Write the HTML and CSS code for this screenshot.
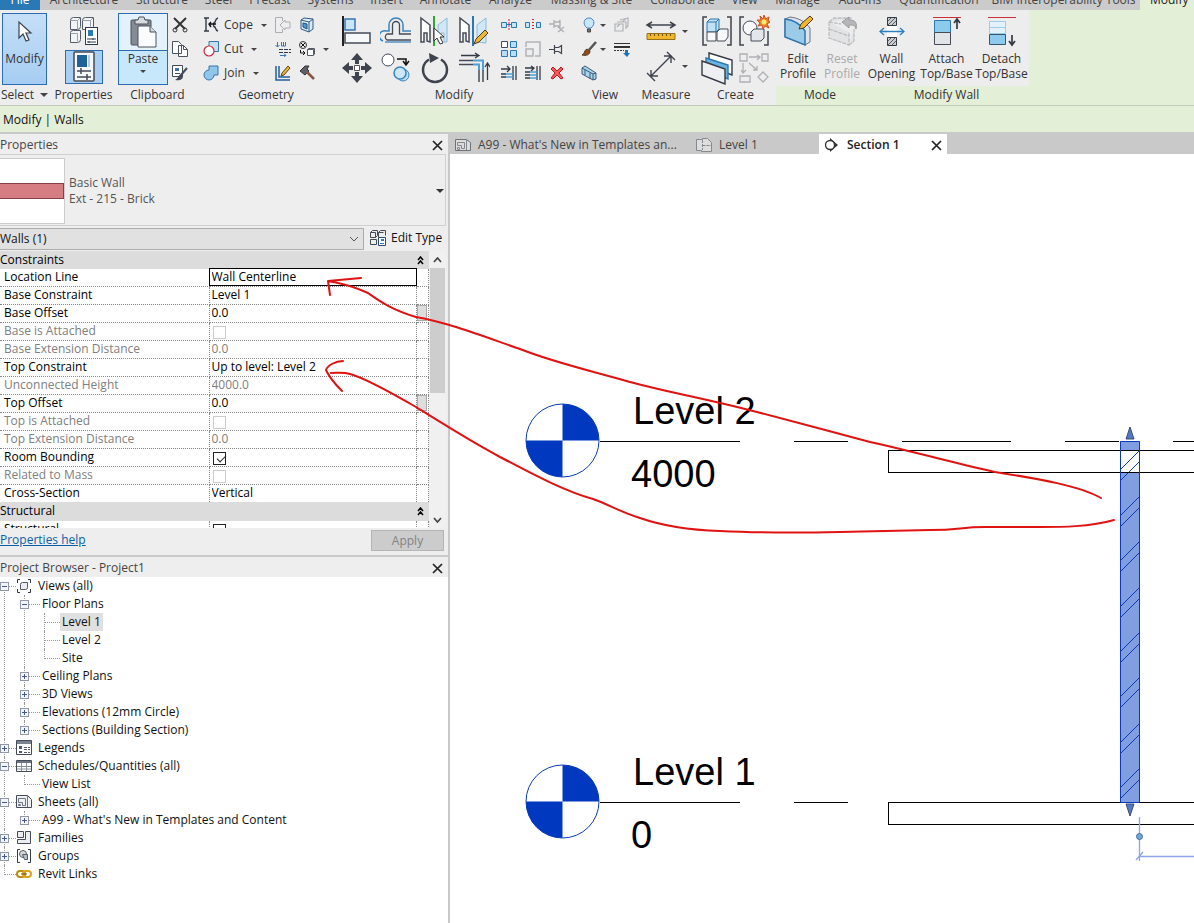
FILE: index.html
```html
<!DOCTYPE html>
<html lang="en">
<head>
<meta charset="utf-8">
<title>Project1 - Section 1</title>
<link rel="stylesheet" href="styles.css">
</head>
<body>
<nav class="tabs">
  <a class="tab file" href="#">File</a><a class="tab" href="#">Architecture</a><a class="tab" href="#">Structure</a><a class="tab" href="#">Steel</a><a class="tab" href="#">Precast</a><a class="tab" href="#">Systems</a><a class="tab" href="#">Insert</a><a class="tab" href="#">Annotate</a><a class="tab" href="#">Analyze</a><a class="tab" href="#">Massing &amp; Site</a><a class="tab" href="#">Collaborate</a><a class="tab" href="#">View</a><a class="tab" href="#">Manage</a><a class="tab" href="#">Add-Ins</a><a class="tab" href="#">Quantification</a><a class="tab" href="#">BIM Interoperability Tools</a><a class="tab current" href="#">Modify | Walls</a>
</nav>

<header class="ribbon">
  <section class="group">
    <div class="tools">
      <button class="modify-btn"><svg width="16" height="24" viewBox="0 0 16 24"><path d="M2 2v16l4-4 3 7 3-1-3-7h5z" fill="#fff" stroke="#3c4450" stroke-width="1.2"/></svg>Modify</button>
    </div>
    <h2>Select <i class="caret big"></i></h2>
  </section>

  <section class="group">
    <div class="tools stack">
      <button aria-label="Type properties"><svg width="32" height="32" viewBox="0 0 32 32"><g fill="#f3f4f6" stroke="#555c68" stroke-width="1"><path d="M2.500 5.500q0-3 3-3h7v9q0 3-3 3h-7zM14.500 5.500q0-3 3-3h8v9q0 3-3 3h-8zM2.500 17.500q0-2 3-2h7v9q0 3-3 3h-7z"/><path d="M2.500 5.500h7v9M9.500 5.500l3-3M14.500 5.500h8v6M22.500 5.500l3-3M2.500 18.500h7v8" fill="none" stroke="#9aa1ac"/></g><rect x="17.500" y="12.500" width="12" height="17" fill="#fff" stroke="#2b3a50"/><path d="M20 15h5v6h-5z" fill="#2c79b5"/><path d="M19 24h9M19 27h9M25 23v2M21 26v2" stroke="#2b3a50"/></svg></button>
      <button class="pressed" aria-label="Properties"><svg width="24" height="32" viewBox="0 0 24 32"><rect x="2" y="1" width="20" height="29" rx="1" fill="#f6f7f8" stroke="#444b57" stroke-width="1.500"/><path d="M5 4h10v12H5z" fill="#1f6199"/><path d="M16 4h2v12h-2z" fill="#b8cbdc"/><path d="M5 20h14M5 26h14M9 17v6M15 23v6" stroke="#444b57" stroke-width="1.500"/></svg></button>
    </div>
    <h2>Properties</h2>
  </section>

  <section class="group">
    <div class="tools clip">
      <button class="paste"><span class="paste-top"><svg width="28" height="32" viewBox="0 0 28 32"><rect x="2" y="4" width="20" height="25" rx="1" fill="#858b95" stroke="#4c525d"/><path d="M6 8V4h3l1-3h5l1 3h3v4z" fill="#d8dbe0" stroke="#4c525d"/><path d="M9 10h12l6 6v15H9z" fill="#fbfcfd" stroke="#4c525d"/><path d="M21 10v6h6" fill="#d2d7df" stroke="#4c525d"/></svg></span><span class="paste-bottom">Paste<i class="caret"></i></span></button>
      <div class="col3">
        <button aria-label="Cut"><svg width="16" height="16" viewBox="0 0 16 16"><path d="M2 1l11 11M14 1L3 12" stroke="#333" stroke-width="2"/><circle cx="3" cy="13" r="2" fill="none" stroke="#333"/><circle cx="13" cy="13" r="2" fill="none" stroke="#333"/></svg></button>
        <button aria-label="Copy"><svg width="16" height="16" viewBox="0 0 16 16"><path d="M.5 .5h6l3 3v9h-9zM6.500 4.500h5l4 4v7h-9z" fill="#fff" stroke="#4c525d"/><path d="M11.500 4.500v4h4" fill="none" stroke="#4c525d"/></svg></button>
        <button aria-label="Match type"><svg width="16" height="16" viewBox="0 0 16 16"><path d="M.5 .5h10v11H.5z" fill="#fff" stroke="#444b57"/><path d="M3 3h4v3H3z" fill="#3974b0"/><path d="M3 8.500h5" stroke="#444b57"/><path d="M15 3L9 10" stroke="#444b57" stroke-width="2"/><path d="M9 9c-3 1-2 4-6 6 4 1 8 0 8-4z" fill="#444b57"/></svg></button>
      </div>
    </div>
    <h2>Clipboard</h2>
  </section>

  <section class="group">
    <div class="tools geo">
      <div class="col3 left">
        <button class="lab"><svg width="16" height="16" viewBox="0 0 16 16"><path d="M1 1h5M1 14h5M3 1v13M15 1c-3 1-2 3-3 4-2 1-2 5 0 5 1 1 0 3 3 4" fill="none" stroke="#333a45" stroke-width="1.400"/><path d="M13 7H6M8 5L6 7l2 3" fill="none" stroke="#111" stroke-width="1.400"/></svg>Cope<i class="caret"></i></button>
        <button class="lab"><svg width="16" height="16" viewBox="0 0 16 16"><path d="M6 .5h9.500v10H6z" fill="#bfe0f5" stroke="#3974b0"/><circle cx="6" cy="10" r="5" fill="#fff" stroke="#cc2936" stroke-width="1.200"/></svg>Cut<i class="caret"></i></button>
        <button class="lab"><svg width="16" height="16" viewBox="0 0 16 16"><path d="M6 1h9v9h-4a5 5 0 1 1-5-5z" fill="#8fc6ea" stroke="#3974b0"/></svg>Join<i class="caret"></i></button>
      </div>
      <div class="col3">
        <button aria-label="Join end"><svg width="16" height="16" viewBox="0 0 16 16"><path d="M7.500 4V.5h-7v15h7V12M15 5h-5V3L5 8l5 5v-2h5z" fill="#eee" stroke="#aaadb2"/></svg></button>
        <button aria-label="Wall joins"><svg width="16" height="16" viewBox="0 0 16 16"><path d="M2.500 1v5M.5 4l2 2 2-2M6.500 1v4h4V1M8.500 1v4" fill="none" stroke="#3974b0"/><path d="M4 8.500h12M4 11.500h12" stroke="#333a45" stroke-dasharray="4 1"/><path d="M5 14.500h6M9 12.500l2 2-2 1" fill="none" stroke="#3974b0"/></svg></button>
        <button aria-label="Beam joins"><svg width="16" height="16" viewBox="0 0 16 16"><path d="M1 1v14h14M4 1v11h11" fill="none" stroke="#225d9c" stroke-width="1.500"/><path d="M6 11l1-3 6-7 2 2-6 7z" fill="#eeb535" stroke="#594420"/></svg></button>
      </div>
      <div class="col3">
        <button aria-label="Split face"><svg width="16" height="16" viewBox="0 0 16 16"><path d="M2 3l8 2v10l-8-3zM10 5l4-3v10l-4 3M2 3l3-2 9 1" fill="#d6eaf7" stroke="#315a85"/><path d="M4 6l4 1v5l-4-2z" fill="#4c9bd0" stroke="#20507c"/></svg></button>
        <button aria-label="Demolish"><svg width="16" height="16" viewBox="0 0 16 16"><circle cx="4" cy="4" r="3.500" fill="none" stroke="#333"/><path d="M2 2l4 4M6 2L2 6M1.500 9v3h4M4 10l2 2-2 2" fill="none" stroke="#111"/><path d="M8.500 8.500h6v6h-6zM8.500 8.500l1-1h6v6" fill="#fff" stroke="#555b66"/></svg></button>
        <button aria-label="Hammer"><svg width="16" height="16" viewBox="0 0 16 16"><path d="M1 6l5-5h4L8 4l2 2-4 4z" fill="#5d6068" stroke="#333"/><path d="M8 7l7 7" stroke="#8b5546" stroke-width="2.500"/></svg></button>
      </div>
      <i class="caret"></i>
    </div>
    <h2>Geometry</h2>
  </section>

  <section class="group">
    <div class="tools mod">
      <div class="big8">
        <button aria-label="Align"><svg width="32" height="32" viewBox="0 0 32 32"><path d="M2 1v30" stroke="#222" stroke-width="2"/><path d="M4 4h10v11H4z" fill="#c9e6f8" stroke="#3974b0" stroke-width="1.500"/><path d="M4 18h25v10H4z" fill="#f7f8fa" stroke="#444b57" stroke-width="1.500"/></svg></button>
        <button aria-label="Offset"><svg width="32" height="32" viewBox="0 0 32 32"><path d="M31 16h-8V10a7 7 0 0 0-14 0v6H6a5 5 0 0 0-3 10" fill="none" stroke="#3a84bd" stroke-width="1.500"/><path d="M31 19H19.500V10a3.500 3.500 0 0 0-7 0v9H7a3.500 3.500 0 0 0 0 6h24" fill="none" stroke="#444b57" stroke-width="1.300"/><path d="M31 27H5" stroke="#3a84bd" stroke-width="1.300"/></svg></button>
        <button aria-label="Mirror pick"><svg width="32" height="32" viewBox="0 0 32 32"><path d="M2 3l9 7v17l-3-1v-8H5v9H2z" fill="#fff" stroke="#444b57" stroke-width="1.500"/><path d="M28 3l-9 7v17l3-1v-8h3v9h3z" fill="#cfe7f7" stroke="#8cbad8"/><path d="M15 1v30" stroke="#35a33c" stroke-width="2"/><path d="M15 13v13l3-3 3 6 3-1-3-6h4z" fill="#fff" stroke="#333"/></svg></button>
        <button aria-label="Mirror draw"><svg width="32" height="32" viewBox="0 0 32 32"><path d="M2 3l9 7v17l-3-1v-8H5v9H2z" fill="#fff" stroke="#444b57" stroke-width="1.500"/><path d="M28 3l-9 7v17l9 1z" fill="#cfe7f7" stroke="#8cbad8"/><path d="M15 1v30" stroke="#2678bc" stroke-width="2"/><path d="M16 29l2-5 9-9 3 3-9 9z" fill="#f1b52e" stroke="#4a3a22"/></svg></button>
        <button aria-label="Move"><svg width="32" height="32" viewBox="0 0 32 32"><path d="M16 1l6 7h-4v4h-4V8h-4zM16 31l6-7h-4v-4h-4v4h-4zM1 16l7-6v4h4v4H8v4zM31 16l-7-6v4h-4v4h4v4z" fill="#3e434d"/><path d="M13.500 13.500h5v5h-5z" fill="#fff" stroke="#555"/></svg></button>
        <button aria-label="Copy element"><svg width="32" height="32" viewBox="0 0 32 32"><circle cx="8" cy="8" r="6" fill="#fff" stroke="#444b57"/><path d="M17 7h9v5M23 9l3 4 3-4" fill="none" stroke="#111" stroke-width="1.500"/><circle cx="23" cy="23" r="6" fill="#b8ddf4" stroke="#3a84bd"/><circle cx="20" cy="21" r="6" fill="#cce8f8" stroke="#3a84bd" stroke-width="1.500"/></svg></button>
        <button aria-label="Rotate"><svg width="32" height="32" viewBox="0 0 32 32"><path d="M10 7.500a12 12 0 1 0 12 0" fill="none" stroke="#3e434d" stroke-width="2.500"/><path d="M10 1l10 5-9 5z" fill="#3e434d"/></svg></button>
        <button aria-label="Trim"><svg width="32" height="32" viewBox="0 0 32 32"><path d="M1 8.500h14M1 12.500h14" stroke="#444b57" stroke-width="1.500"/><path d="M15 8.500h10V18M15 12.500h6V18" fill="none" stroke="#4f9ed4" stroke-width="2"/><path d="M25 18v12M21 18v12" stroke="#444b57" stroke-width="1.500"/><path d="M3 3.500h17M17 1l4 2.500L17 6M29.500 28V12M27 15l2.500-4 2.500 4" fill="none" stroke="#333a45" stroke-width="1.300"/></svg></button>
      </div>
      <div class="col3">
        <button aria-label="Split"><svg width="16" height="16" viewBox="0 0 16 16"><path d="M.5 5.500h5v5h-5zM10.500 5.500h5v5h-5z" fill="#c9e6f8" stroke="#2d77ae"/><path d="M5 7.500h6" stroke="#2d77ae"/><path d="M8 2v12" stroke="#cc2936" stroke-dasharray="2 1"/></svg></button>
        <button aria-label="Array"><svg width="16" height="16" viewBox="0 0 16 16"><path d="M.5 .5h6v6h-6z" fill="#fff" stroke="#444b57"/><path d="M9.500 .5h6v6h-6zM.5 9.500h6v6h-6zM9.500 9.500h6v6h-6z" fill="#b9ddf4" stroke="#2d77ae"/></svg></button>
        <button aria-label="Trim single"><svg width="16" height="16" viewBox="0 0 16 16"><path d="M0 4h9M6 1l3 3-3 3M12 1v14M15 1v14M0 12h5M0 9h5" fill="none" stroke="#333a45" stroke-width="1.300"/><path d="M5 9h7M5 12h7" stroke="#4f9ed4" stroke-width="1.500"/></svg></button>
      </div>
      <div class="col3">
        <button aria-label="Split with gap"><svg width="16" height="16" viewBox="0 0 16 16"><path d="M.5 5.500h4v5h-4zM11.500 5.500h4v5h-4z" fill="#c9e6f8" stroke="#2d77ae"/><path d="M8 2v12" stroke="#cc2936" stroke-width="2" stroke-dasharray="1 2"/></svg></button>
        <button aria-label="Scale"><svg width="16" height="16" viewBox="0 0 16 16"><path d="M1 1h14v14h-5M1 1v5M1 8h7v7H1z" fill="#eee" stroke="#b1b3b7" stroke-width="1.500"/></svg></button>
        <button aria-label="Trim multiple"><svg width="16" height="16" viewBox="0 0 16 16"><path d="M0 3h9M6 1l3 2-3 3M12 1v14M15 1v14M0 7h5M0 10h5M0 13h5" fill="none" stroke="#333a45" stroke-width="1.300"/><path d="M5 7h7M5 10h7M5 13h7" stroke="#4f9ed4" stroke-width="1.500"/></svg></button>
      </div>
      <div class="col3">
        <button aria-label="Unpin"><svg width="16" height="16" viewBox="0 0 16 16"><path d="M0 7h5M5 3v8M5 5h5l1-2v8l-1-2H5M9 10l6 5M15 10l-6 5" fill="none" stroke="#aeb0b4" stroke-width="1.300"/></svg></button>
        <button aria-label="Pin"><svg width="16" height="16" viewBox="0 0 16 16"><path d="M0 8.500h5M5.500 4v9M5.500 6.500h4l3-2v8l-3-2h-4" fill="none" stroke="#3e434d" stroke-width="1.200"/></svg></button>
        <button aria-label="Delete"><svg width="16" height="16" viewBox="0 0 16 16"><path d="M2 4l2-2 4 4 4-4 2 2-4 4 4 5-2 1-4-4-4 4-2-1 4-5z" fill="#f05a5a" stroke="#bd1820"/></svg></button>
      </div>
    </div>
    <h2>Modify</h2>
  </section>

  <section class="group">
    <div class="tools view">
      <div class="col3 left">
        <button class="lab tight" aria-label="Hide"><svg width="16" height="16" viewBox="0 0 16 16"><path d="M6 11C1 7 3 1 8 1s7 6 2 10z" fill="#c9e6fb" stroke="#4a86bd"/><path d="M6.500 12h3v3h-3z" fill="#777" stroke="#444"/></svg><i class="caret"></i></button>
        <button class="lab tight" aria-label="Override"><svg width="16" height="16" viewBox="0 0 16 16"><path d="M15 1L8 9" stroke="#555" stroke-width="2.500"/><path d="M6 8l3 2c0 4-4 5-8 4 3-1 2-5 5-6z" fill="#8a4f22" stroke="#5a3418"/></svg><i class="caret"></i></button>
        <button aria-label="Selection box"><svg width="16" height="16" viewBox="0 0 16 16"><path d="M1 3l3-2 11 7v6l-3 1L1 9z" fill="#a9d4ee" stroke="#3e5872"/><path d="M1 3l11 6v6M12 9l3-1M4 5v5M9 8v6" fill="none" stroke="#3e5872"/></svg></button>
      </div>
      <div class="col3">
        <button aria-label="Displace"><svg width="16" height="16" viewBox="0 0 16 16"><path d="M1 7h8v7H1zM3 5h9v7M6 3l8-2v8l-2 2M3 10l3-3M8 5l4-3" fill="none" stroke="#b1b3b7" stroke-width="1.200"/></svg></button>
        <button aria-label="Linework"><svg width="16" height="16" viewBox="0 0 16 16"><path d="M0 2.500h16" stroke="#333"/><path d="M0 6h16" stroke="#333" stroke-width="2"/><path d="M0 9.500h10" stroke="#333" stroke-dasharray="2 1"/><path d="M11 9h3v3h2l-3 4-4-4h2z" fill="#2272b8"/></svg></button>
        <span></span>
      </div>
    </div>
    <h2>View</h2>
  </section>

  <section class="group">
    <div class="tools stack">
      <button class="lab" aria-label="Measure"><svg width="32" height="32" viewBox="0 0 32 32"><path d="M2 9h28M7 6L2 9l5 3M25 6l5 3-5 3" fill="none" stroke="#3e434d" stroke-width="1.500"/><path d="M2 17.500h28v6H2z" fill="#f0b62c" stroke="#98701a"/><path d="M5.500 18v2M9.500 18v2M13.500 18v2M17.500 18v2M21.500 18v2M25.500 18v2" stroke="#6d5117"/></svg><i class="caret"></i></button>
      <button class="lab" aria-label="Aligned dimension"><svg width="32" height="32" viewBox="0 0 32 32"><path d="M6 25L26 5M19 5h7v7M6 19v6h7M22 1l8 8M2 22l8 8" fill="none" stroke="#3e434d" stroke-width="1.400"/></svg><i class="caret"></i></button>
    </div>
    <h2>Measure</h2>
  </section>

  <section class="group">
    <div class="tools create">
      <button aria-label="Create assembly"><svg width="32" height="32" viewBox="0 0 32 32"><path d="M6 2H2v28h4M26 2h4v28h-4" fill="none" stroke="#3e434d" stroke-width="1.500"/><path d="M6 7l3-3h9v10l-3 3H6z" fill="#bfe2f6" stroke="#2d77ae"/><path d="M6 7h9v10M15 7l3-3" fill="none" stroke="#2d77ae"/><path d="M6 17h9v9H6zM16 17l3-3h8v8l-3 4h-8z" fill="#f7f8fa" stroke="#444b57"/></svg></button>
      <button aria-label="Create parts"><svg width="32" height="32" viewBox="0 0 32 32"><path d="M6 2H2v28h4M26 30h4V16" fill="none" stroke="#3e434d" stroke-width="1.500"/><circle cx="12" cy="13" r="7" fill="#f7f8fa" stroke="#444b57"/><path d="M13 17l3-3h10v9l-3 3H13z" fill="#e3e6ea" stroke="#444b57"/><path d="M26 0l1.500 4L31 2l-1 4 2 1-3 2 2 4-4-2-2 3-1-4-4 1 2-3-3-3 4 0-1-4 3 3z" fill="#f08a24" stroke="#cf4a1c"/><circle cx="26" cy="7" r="2.500" fill="#ffe878"/></svg></button>
      <button aria-label="Create similar"><svg width="34" height="34" viewBox="0 0 34 34"><g stroke="#333a45" stroke-width="1.400"><path d="M9 2l23 7v15L9 15z" fill="#fff"/><path d="M6 7l22 7v14L6 19z" fill="#68b2e3" stroke="#2d77ae"/><path d="M2 10l23 8v15L2 24z" fill="#edeff2"/></g></svg></button>
      <button aria-label="Create group"><svg width="32" height="32" viewBox="0 0 32 32"><path d="M2 2h7v7H2zM24 2h6v7h-6zM2 24h10v6H2zM25 20l5 5-5 5-5-5zM11 5h11M19 3l3 2-3 3M5 11v10M3 18l2 3 3-3M11 11l8 7M19 14v4h-4" fill="none" stroke="#aeb0b4" stroke-width="1.300"/></svg></button>
    </div>
    <h2>Create</h2>
  </section>

  <section class="group ctx">
    <div class="tools wide">
      <button class="tall"><svg width="32" height="32" viewBox="0 0 32 32"><path d="M3 4l5-2c8 1 15 4 20 11v14l-5 3L3 22z" fill="#dde3e8" stroke="#6b7683"/><path d="M3 4c9 1 15 4 20 12v14L3 22z" fill="#9ccbe8" stroke="#2d77ae" stroke-width="1.500"/><path d="M17 14l2-5 9-8 3 3-9 9z" fill="#f1b52e" stroke="#4a3a22"/></svg>Edit<br>Profile</button>
      <button class="tall" disabled><svg width="32" height="32" viewBox="0 0 32 32"><path d="M3 7l5-4h18M3 7v16l20 7V17M3 14l20 7M23 30l5-4V14M3 7l12 2" fill="#e2e3e5" stroke="#bcbec1" stroke-width="1.300" stroke-dasharray="4 1"/><path d="M16 7l7-5v3c7 0 8 3 7 9-1-4-3-4-7-4v3z" fill="#b5b7ba" stroke="#999"/></svg>Reset<br>Profile</button>
    </div>
    <h2>Mode</h2>
  </section>

  <section class="group ctx">
    <div class="tools wide">
      <button class="tall"><svg width="32" height="32" viewBox="0 0 32 32"><path d="M11.500 2.500h9v8h-9zM11.500 22.500h9v8h-9z" fill="#c9ccd1" stroke="#333a45"/><path d="M12 6l3-3M12 10l7-7M16 10l4-4M12 26l3-3M12 30l7-7M16 30l4-4" stroke="#555c66"/><path d="M11 11h10v11H11z" fill="#fff"/><path d="M4 16.500h24M8 13l-4 3.500L8 20M24 13l4 3.500-4 3.500" fill="none" stroke="#2d7fc0" stroke-width="1.300"/></svg>Wall<br>Opening</button>
      <button class="tall"><svg width="32" height="32" viewBox="0 0 32 32"><path d="M2 2.500h28" stroke="#cb2f38"/><path d="M3.500 5.500h16v12h-16z" fill="#8ec9ee" stroke="#2d77ae"/><path d="M3.500 17.500h16v12h-16z" fill="#e2e4e8" stroke="#444b57"/><path d="M26 14V4M23 8l3-4 3 4" fill="none" stroke="#333a45" stroke-width="1.700"/></svg>Attach<br>Top/Base</button>
      <button class="tall"><svg width="32" height="32" viewBox="0 0 32 32"><path d="M2 2.500h28" stroke="#cb2f38"/><path d="M3.500 6.500h16v6h-16zM3.500 12.500h16v6h-16z" fill="#e3f2fb" stroke="#9ccce9"/><path d="M3.500 19.500h16v10h-16z" fill="#8ec9ee" stroke="#36546e"/><path d="M26 20v10M23 26l3 4 3-4" fill="none" stroke="#333a45" stroke-width="1.700"/></svg>Detach<br>Top/Base</button>
    </div>
    <h2>Modify Wall</h2>
  </section>
</header>

<div class="options">Modify | Walls</div>

<div class="work">
  <aside class="side">
    <section class="props">
      <div class="title"><h3>Properties</h3><button aria-label="Close properties"><svg width="11" height="11" viewBox="0 0 11 11"><path d="M1 1l9 9M10 1l-9 9" stroke="#222" stroke-width="1.700"/></svg></button></div>
      <div class="type">
        <div class="thumb"><span></span></div>
        <p>Basic Wall<br>Ext - 215 - Brick</p>
        <i class="caret big"></i>
      </div>
      <div class="filter">
        <select aria-label="Element filter"><option>Walls (1)</option></select>
        <svg class="chev" width="10" height="6" viewBox="0 0 10 6"><path d="M1 1l4 4 4-4" fill="none" stroke="#555"/></svg>
        <button class="edit"><svg width="17" height="16" viewBox="0 0 17 16"><path d="M.5 2.500l2-2h5v5l-2 2h-5zM8.500 2.500l2-2h5v5M.5 9.500h6v5h-6zM.5 2.500h5v5M8.500 7.500v-5h5" fill="none" stroke="#444b57"/><path d="M8.500 7.500h7v8h-7z" fill="#fff" stroke="#2b4a72"/><path d="M11 9h3v2h-3z" fill="#2c79b5"/><path d="M10 13.500h4" stroke="#2c79b5"/></svg>Edit Type</button>
      </div>
      <div class="gridwrap">
        <table>
          <colgroup><col class="c1"><col><col class="c3"></colgroup>
          <tbody>
          <tr class="cat first"><th colspan="2">Constraints</th><td><svg width="7" height="9" viewBox="0 0 7 9"><path d="M1 4l2.500-3L6 4M1 8l2.500-3L6 8" fill="none" stroke="#000" stroke-width="1.500"/></svg></td></tr>
          <tr class="sel"><th><label for="p1">Location Line</label></th><td><input id="p1" value="Wall Centerline"></td><td></td></tr>
          <tr><th><label for="p2">Base Constraint</label></th><td><input id="p2" value="Level 1"></td><td></td></tr>
          <tr><th><label for="p3">Base Offset</label></th><td><input id="p3" value="0.0"></td><td><button class="assoc" aria-label="Associate base offset"></button></td></tr>
          <tr class="off"><th><label for="p4">Base is Attached</label></th><td><input id="p4" type="checkbox" disabled></td><td></td></tr>
          <tr class="off"><th><label for="p5">Base Extension Distance</label></th><td><input id="p5" value="0.0" disabled></td><td></td></tr>
          <tr><th><label for="p6">Top Constraint</label></th><td><input id="p6" value="Up to level: Level 2"></td><td></td></tr>
          <tr class="off"><th><label for="p7">Unconnected Height</label></th><td><input id="p7" value="4000.0" disabled></td><td></td></tr>
          <tr><th><label for="p8">Top Offset</label></th><td><input id="p8" value="0.0"></td><td><button class="assoc" aria-label="Associate top offset"></button></td></tr>
          <tr class="off"><th><label for="p9">Top is Attached</label></th><td><input id="p9" type="checkbox" disabled></td><td></td></tr>
          <tr class="off"><th><label for="p10">Top Extension Distance</label></th><td><input id="p10" value="0.0" disabled></td><td></td></tr>
          <tr><th><label for="p11">Room Bounding</label></th><td><input id="p11" type="checkbox" checked></td><td></td></tr>
          <tr class="off"><th><label for="p12">Related to Mass</label></th><td><input id="p12" type="checkbox" disabled></td><td></td></tr>
          <tr><th><label for="p13">Cross-Section</label></th><td><input id="p13" value="Vertical"></td><td></td></tr>
          <tr class="cat"><th colspan="2">Structural</th><td><svg width="7" height="9" viewBox="0 0 7 9"><path d="M1 4l2.500-3L6 4M1 8l2.500-3L6 8" fill="none" stroke="#000" stroke-width="1.500"/></svg></td></tr>
          <tr><th><label for="p14">Structural</label></th><td><input id="p14" type="checkbox"></td><td></td></tr>
          </tbody>
        </table>
        <div class="scroll"><svg width="9" height="6" viewBox="0 0 9 6"><path d="M1 5l3.500-4L8 5" fill="none" stroke="#444" stroke-width="1.700"/></svg><span></span><svg width="9" height="6" viewBox="0 0 9 6"><path d="M1 1l3.500 4L8 1" fill="none" stroke="#444" stroke-width="1.700"/></svg></div>
      </div>
      <div class="foot"><a href="#">Properties help</a><button disabled>Apply</button></div>
    </section>

    <section class="browser">
      <div class="title"><h3>Project Browser - Project1</h3><button aria-label="Close browser"><svg width="11" height="11" viewBox="0 0 11 11"><path d="M1 1l9 9M10 1l-9 9" stroke="#222" stroke-width="1.700"/></svg></button></div>
      <ul class="tree">
        <li class="top"><div class="row"><i class="ex minus"></i><i class="dash"></i><svg width="16" height="16" viewBox="0 0 16 16"><path d="M4 1.500H1.500V5M12 1.500h2.500V5M4 14.500H1.500V11M12 14.500h2.500V11" fill="none" stroke="#333a45"/><path d="M4.500 6.500q0-2 2-2h5v5q0 2-2 2h-5z" fill="#eceef1" stroke="#555b66"/></svg><span>Views (all)</span></div>
          <ul>
            <li><div class="row"><i class="ex minus"></i><i class="dash"></i><span>Floor Plans</span></div>
              <ul class="leaves">
                <li><div class="row"><i class="dash"></i><span class="hot">Level 1</span></div></li>
                <li><div class="row"><i class="dash"></i><span>Level 2</span></div></li>
                <li><div class="row"><i class="dash"></i><span>Site</span></div></li>
              </ul></li>
            <li><div class="row"><i class="ex"></i><i class="dash"></i><span>Ceiling Plans</span></div></li>
            <li><div class="row"><i class="ex"></i><i class="dash"></i><span>3D Views</span></div></li>
            <li><div class="row"><i class="ex"></i><i class="dash"></i><span>Elevations (12mm Circle)</span></div></li>
            <li><div class="row"><i class="ex"></i><i class="dash"></i><span>Sections (Building Section)</span></div></li>
          </ul></li>
        <li><div class="row"><i class="ex"></i><i class="dash"></i><svg width="16" height="16" viewBox="0 0 16 16"><path d="M.5 .5h15v14H.5z" fill="#fff" stroke="#444b57"/><path d="M1 1h14v3H1z" fill="#7b838e"/><path d="M3 6h3v3H3zM3 11h3v2H3z" fill="#555b66"/><path d="M8 7.500h6M8 9.500h6M8 12.500h6" stroke="#555b66" stroke-dasharray="3 1"/></svg><span>Legends</span></div></li>
        <li><div class="row"><i class="ex minus"></i><i class="dash"></i><svg width="16" height="16" viewBox="0 0 16 16"><path d="M.5 2.500h15v11H.5z" fill="#fff" stroke="#444b57"/><path d="M1 3h14v2H1z" fill="#6d7580"/><path d="M1 8.500h14M1 11h14M5.500 5v8M10.500 5v8" stroke="#8a919b"/></svg><span>Schedules/Quantities (all)</span></div>
          <ul><li><div class="row leaf"><i class="dash"></i><span>View List</span></div></li></ul></li>
        <li><div class="row"><i class="ex minus"></i><i class="dash"></i><svg width="16" height="16" viewBox="0 0 16 16"><path d="M.5 1.500h11l4 4v8H.5z" fill="#eef0f3" stroke="#444b57"/><path d="M2.500 4.500h7v7h-3v-3h-4zM2.500 10.500h2v1h-2zM11.500 2v11" fill="none" stroke="#6d7580"/></svg><span>Sheets (all)</span></div>
          <ul><li><div class="row"><i class="ex"></i><i class="dash"></i><span>A99 - What's New in Templates and Content</span></div></li></ul></li>
        <li><div class="row"><i class="ex"></i><i class="dash"></i><svg width="16" height="16" viewBox="0 0 16 16"><path d="M1.500 1.500h6v6h-6zM9.500 1.500h5v12h-13v-4h8z" fill="#eceef1" stroke="#444b57"/></svg><span>Families</span></div></li>
        <li><div class="row"><i class="ex"></i><i class="dash"></i><svg width="16" height="16" viewBox="0 0 16 16"><path d="M4 1.500H1.500v13H4M12 1.500h2.500v13H12" fill="none" stroke="#333a45"/><circle cx="7" cy="6" r="3.500" fill="#d5d9df" stroke="#555b66"/><path d="M6.500 6.500h5v5h-3z" fill="#b9bfc8" stroke="#555b66"/></svg><span>Groups</span></div></li>
        <li><div class="row leaf root"><i class="dash"></i><svg width="16" height="16" viewBox="0 0 16 16"><rect x="1" y="5" width="8" height="6" rx="3" fill="none" stroke="#c08a10" stroke-width="2"/><rect x="7" y="5" width="8" height="6" rx="3" fill="none" stroke="#d9a520" stroke-width="2"/><path d="M5 8h6" stroke="#79560c"/></svg><span>Revit Links</span></div></li>
      </ul>
    </section>
  </aside>

  <main class="stage">
    <nav class="docs">
      <a href="#"><svg width="16" height="14" viewBox="0 0 16 14"><path d="M.5 1.500h11l4 3v8H.5z" fill="#ddd" stroke="#6d7277"/><path d="M2.500 4.500h7v6h-3v-3h-4zM2.500 9.500h2v2h-2zM11.500 2v10" fill="none" stroke="#85898e"/></svg>A99 - What's New in Templates an...</a>
      <a href="#"><svg width="16" height="14" viewBox="0 0 16 14"><path d="M.5 1.500h6v-1h5l4 4v9H5.500v-1h-5z" fill="#ddd" stroke="#85898e"/><path d="M6.500 2v10M6.500 7.500h9" fill="none" stroke="#85898e" stroke-dasharray="3 1"/></svg>Level 1</a>
      <a href="#" class="active"><svg width="14" height="14" viewBox="0 0 14 14"><path d="M6 0l8 7-8 7z" fill="#333"/><circle cx="6" cy="7" r="4.500" fill="#fff" stroke="#333" stroke-width="1.300"/></svg>Section 1<svg class="x" width="11" height="11" viewBox="0 0 11 11"><path d="M1 1l9 9M10 1l-9 9" stroke="#222" stroke-width="1.700"/></svg></a>
    </nav>
    <div class="canvas">
      <svg class="drawing" width="744" height="769" viewBox="450 154 744 769">
        <defs>
          <g id="head"><circle r="36.500" fill="#fff" stroke="#0a3ab8"/><path d="M0 0V-36.500A36.500 36.500 0 0 1 36.500 0zM0 0V36.500A36.500 36.500 0 0 1-36.500 0z" fill="#0038c0"/></g>
          <path id="hatch" d="M1121 469l18-18M1121 480l18-18"/>
        </defs>
        <use href="#head" x="562.500" y="440.500"/>
        <use href="#head" x="562.500" y="801.500"/>
        <g class="lettering"><text x="633" y="424">Level 2</text><text x="631" y="487">4000</text><text x="633" y="785">Level 1</text><text x="631" y="848">0</text></g>
        <g fill="none" stroke="#000" shape-rendering="crispEdges">
          <path d="M600 441.500h140M794 441.500h54M902 441.500h109M1065 441.500h54M1173 441.500h200M600 802.500h140M794 802.500h54"/>
          <path d="M2000 450.500H888.500v22H2000M2000 802.500H888.500v22H2000"/>
        </g>
        <path d="M1120 441h20v361h-20z" fill="#809ee0"/>
        <path d="M1120 451h20v21h-20z" fill="#fff"/>
        <g stroke="#0a3ab8" fill="none">
          <use href="#hatch"/><use href="#hatch" y="46"/><use href="#hatch" y="91"/><use href="#hatch" y="137"/><use href="#hatch" y="182"/><use href="#hatch" y="227"/><use href="#hatch" y="273"/><use href="#hatch" y="318"/>
        </g>
        <path d="M1120 450.500h20M1120 472.500h20" stroke="#000"/>
        <path d="M1120.500 441.500h19v361h-19z" fill="none" stroke="#0a3ab8"/>
        <path d="M1130 427l4 12h-8zM1126 804h8l-4 12z" fill="#5578c4" stroke="#3d4d70"/>
        <g fill="none" stroke="#8fa4ea"><path d="M1139.500 817v44M1139.500 856.500H2000M1136 860l7-8" stroke-width="1.300"/><circle cx="1139.500" cy="836.500" r="3" fill="#6fa8dc" stroke="#3f6f9f"/></g>
      </svg>
    </div>
  </main>

  <svg class="markup" width="1194" height="789" viewBox="0 134 1194 789">
    <g fill="none" stroke="#e01212" stroke-width="2" stroke-linecap="round" stroke-linejoin="round">
      <path d="M1101 498C1080 486 1040 479 995 472C960 464 910 451 870 442C840 434 780 418 757 412C700 397 660 391 623 380C580 368 550 361 520 349C485 337 450 323 416 317C390 309 378 300 368 293C355 287 340 283 328 281M361 278L328 281l2 14"/>
      <path d="M1114 520C1090 527 1060 527 1040 527L985 527C960 527 960 530 930 530L840 532C790 533 740 532 720 531C690 530 660 525 640 518C620 512 610 505 593 499C560 490 520 467 500 457C470 441 440 422 416 407C390 392 365 378 350 374C343 372 338 373 331 373M343 361C335 361 327 366 326 370C330 379 337 386 342 391"/>
    </g>
  </svg>
</div>
</body>
</html>
```
FILE: styles.css
```css
* { box-sizing: border-box; }
html, body { height: 100%; }
body { margin: 0; display: flex; flex-direction: column; overflow: hidden; background: #c9c9c9; color: #333; font: 12px/16px "Open Sans", "Noto Sans", sans-serif; }
button { margin: 0; padding: 0; border: 0; background: none; color: inherit; font: inherit; display: flex; align-items: center; justify-content: center; }
svg { flex: none; display: block; }
h2, h3, p, ul { margin: 0; padding: 0; font: inherit; list-style: none; }
.caret { flex: none; width: 0; height: 0; border: 3px solid transparent; border-top-color: #444; border-bottom: 0; }
.caret.big { border-width: 4px 4px 0; }

.tabs { flex: none; height: 10px; overflow: hidden; display: grid; align-content: end; background: #cbcbcb;
  grid-template-columns: 40px 88px 68px 45px 58px 63px 49px 69px 61px 101px 81px 43px 63px 62px 96px 153px 60px; }
.tab { color: #444; text-decoration: none; text-align: center; white-space: nowrap; padding-bottom: 2px; }
.tab.file { background: #2a78b4; color: #fff; }
.tab.current { background: #e4efd8; color: #222; text-align: left; padding-left: 10px; }

.ribbon { flex: none; height: 96px; display: grid; background: linear-gradient(90deg, #ededed 776px, #e4efd8 776px); border-bottom: 1px solid #c3c9bd;
  grid-template-columns: 49px 69px 79px 138px 238px 64px 58px 81px 88px 165px; }
.group { display: flex; flex-direction: column; min-width: 0; }
.group h2 { height: 19px; line-height: 16px; padding-bottom: 2px; display: flex; align-items: center; justify-content: center; gap: 6px; white-space: nowrap; }
.tools { height: 76px; padding-top: 2px; display: flex; align-items: center; justify-content: center; }
.ctx .tools { background: #ededed; }
.modify-btn { width: 45px; height: 72px; flex-direction: column; justify-content: flex-start; padding-top: 6px; gap: 7px; border: 1px solid #2b6cb5; background: linear-gradient(#c5dff7, #a5cdf2); }
.stack { flex-direction: column; gap: 3px; }
.pressed { width: 38px; height: 34px; border: 1px solid #2b6cb5; background: #a8cff2; }
.clip { gap: 4px; justify-content: flex-start; }
.paste { width: 50px; height: 72px; flex-direction: column; border: 1px solid #2b6cb5; background: #c7e8fb; align-items: stretch; }
.paste-top { height: 37px; display: flex; justify-content: center; align-items: center; background: #e4f2fb; border-bottom: 1px solid #2b6cb5; }
.paste-bottom { flex: 1; display: flex; flex-direction: column; align-items: center; gap: 3px; }
.col3 { display: grid; grid-template-rows: repeat(3, 24px); align-items: center; justify-items: center; }
.col3.left { justify-items: start; }
.lab { gap: 5px; }
.lab .caret { margin-left: 3px; }
.lab.tight { gap: 0; }
.geo { gap: 8px; }
.mod { gap: 8px; justify-content: flex-start; padding-left: 2px; }
.big8 { display: grid; grid-template-columns: repeat(4, 39px); grid-template-rows: 37px 37px; align-items: center; justify-items: center; }
.view { gap: 8px; }
.stack .lab { gap: 2px; }
.create { display: grid; grid-template-columns: 37px 37px; grid-template-rows: 37px 37px; place-items: center; }
.wide { align-items: flex-start; }
.tall { flex: 1; height: 74px; flex-direction: column; justify-content: flex-start; padding-top: 3px; line-height: 15px; }
.tall svg { margin-bottom: 4px; }
.tall:disabled { color: #aaa; }

.options { flex: none; height: 28px; padding: 6px 3px; background: #e4efd8; color: #111; border-bottom: 2px solid #c9c9c9; }

.work { position: relative; flex: 1; min-height: 0; display: flex; }
.side { flex: none; width: 448px; margin-right: 2px; display: flex; flex-direction: column; }
.title { height: 20px; padding: 2px 5px 0 0; display: flex; align-items: center; justify-content: space-between; background: #eee; color: #444; }
.props { height: 421px; background: #eee; }
.type { height: 72px; margin-right: 2px; padding: 2px 1px 0 0; display: flex; align-items: center; border: 1px solid #d0d0d0; border-left: 0; color: #555; }
.type p { flex: 1; padding-left: 4px; }
.type .caret { border-top-color: #333; }
.thumb { width: 65px; height: 66px; display: flex; align-items: center; background: #fff; border: 1px solid #ccc; border-left: 0; }
.thumb span { width: 100%; height: 16px; background: #d67d84; border: 1px solid #884048; border-left: 0; }
.filter { position: relative; height: 25px; display: flex; align-items: center; padding-top: 1px; }
.filter select { appearance: none; width: 364px; height: 22px; padding: 0; border: 1px solid #adadad; border-left: 0; border-radius: 0; background: #e1e1e1; color: #111; font: inherit; }
.chev { position: absolute; left: 349px; top: 10px; }
.edit { gap: 4px; margin-left: 6px; padding-bottom: 2px; color: #111; }
.gridwrap { height: 277px; overflow: hidden; display: flex; }
table { width: 429px; flex: none; table-layout: fixed; border-collapse: collapse; background: #fff; color: #000; align-self: flex-start; }
.c1 { width: 209px; }
.c3 { width: 12px; }
th, td { height: 18px; padding: 0; font-weight: 400; line-height: 16px; text-align: left; vertical-align: top; border: 1px dotted #888; }
.first th, .first td { height: 17px; }
th { padding-left: 4px; border-left: 0; }
th label { display: block; height: 17px; }
td > svg { margin: 4px 0 0; }
.cat th { padding-left: 0; }
.cat th, .cat td { background: #dcdcdc; border-color: #dcdcdc; border-style: solid; }
.off { color: #808080; }
td input { display: block; width: 100%; height: 16px; line-height: 16px; margin: 0; padding: 0 2px; border: 0; background: none; color: inherit; font: inherit; }
.sel input { outline: 1px solid #000; outline-offset: 0; }
td input[type="checkbox"] { appearance: none; width: 13px; height: 13px; margin: 3px 0 1px 3px; border: 1px solid #222; background: #fff; }
td input[type="checkbox"]:disabled { border-color: #ccc; }
td input[type="checkbox"]:checked::after { content: ""; display: block; width: 8px; height: 4px; margin: 2px 1px; border: solid #222; border-width: 0 0 1px 1px; transform: rotate(-45deg); }
.assoc { width: 10px; height: 16px; border: 1px solid #aaa; background: #ddd; }
.scroll { width: 17px; display: flex; flex-direction: column; align-items: center; padding: 6px 0 5px; background: #f0f0f0; }
.scroll span { width: 15px; height: 125px; margin: 5px 0 auto; background: #cdcdcd; }
.foot { height: 27px; padding: 2px 4px 0 0; display: flex; justify-content: space-between; align-items: flex-start; }
.foot a { color: #0a5ea8; line-height: 20px; }
.foot button { width: 73px; height: 21px; border: 1px solid #b5b5b5; background: #ccc; color: #838383; }

.browser { flex: 1; margin-top: 2px; background: #fff; color: #111; }
.tree li { position: relative; }
.tree li::before { content: ""; position: absolute; left: 4px; top: 0; bottom: 0; border-left: 1px dotted #999; }
.tree .top::before { top: 10px; }
.tree li:last-child::before { bottom: auto; height: 10px; }
.tree ul { margin-left: 20px; }
.row { position: relative; height: 18px; display: flex; align-items: center; white-space: nowrap; }
.row span { line-height: 18px; padding: 0 2px; }
.row svg + span { padding-left: 6px; }
.ex { flex: none; position: relative; width: 9px; height: 9px; border: 1px solid #8f97a8; background: linear-gradient(#445a8c, #445a8c) center / 5px 1px no-repeat, linear-gradient(#445a8c, #445a8c) center / 1px 5px no-repeat, #f4f5f8; }
.ex.minus { background: linear-gradient(#445a8c, #445a8c) center / 5px 1px no-repeat, #f4f5f8; }
.dash { width: 7px; border-top: 1px dotted #999; }
.tree ul .dash { width: 11px; }
.tree .leaf .dash, .tree .leaves .dash { width: 15px; margin-left: 5px; }
.tree .root .dash { width: 11px; }
.hot { background: #e0e0e0; }

.stage { flex: 1; min-width: 0; display: flex; flex-direction: column; }
.docs { height: 20px; display: flex; background: #c9c9c9; }
.docs a { width: 241px; padding: 2px 0 0 5px; display: flex; align-items: center; gap: 7px; color: #444; text-decoration: none; white-space: nowrap; }
.docs a + a { width: 128px; }
.docs .active { background: #fff; color: #222; font-weight: 600; gap: 9px; }
.docs .x { margin-left: auto; margin-right: 5px; }
.canvas { position: relative; flex: 1; background: #fff; overflow: hidden; }
.drawing { position: absolute; left: 0; top: 0; overflow: visible; }
.lettering { font: 38px "Liberation Sans", Arial, sans-serif; fill: #000; }
.markup { position: absolute; left: 0; top: 0; pointer-events: none; }
```
